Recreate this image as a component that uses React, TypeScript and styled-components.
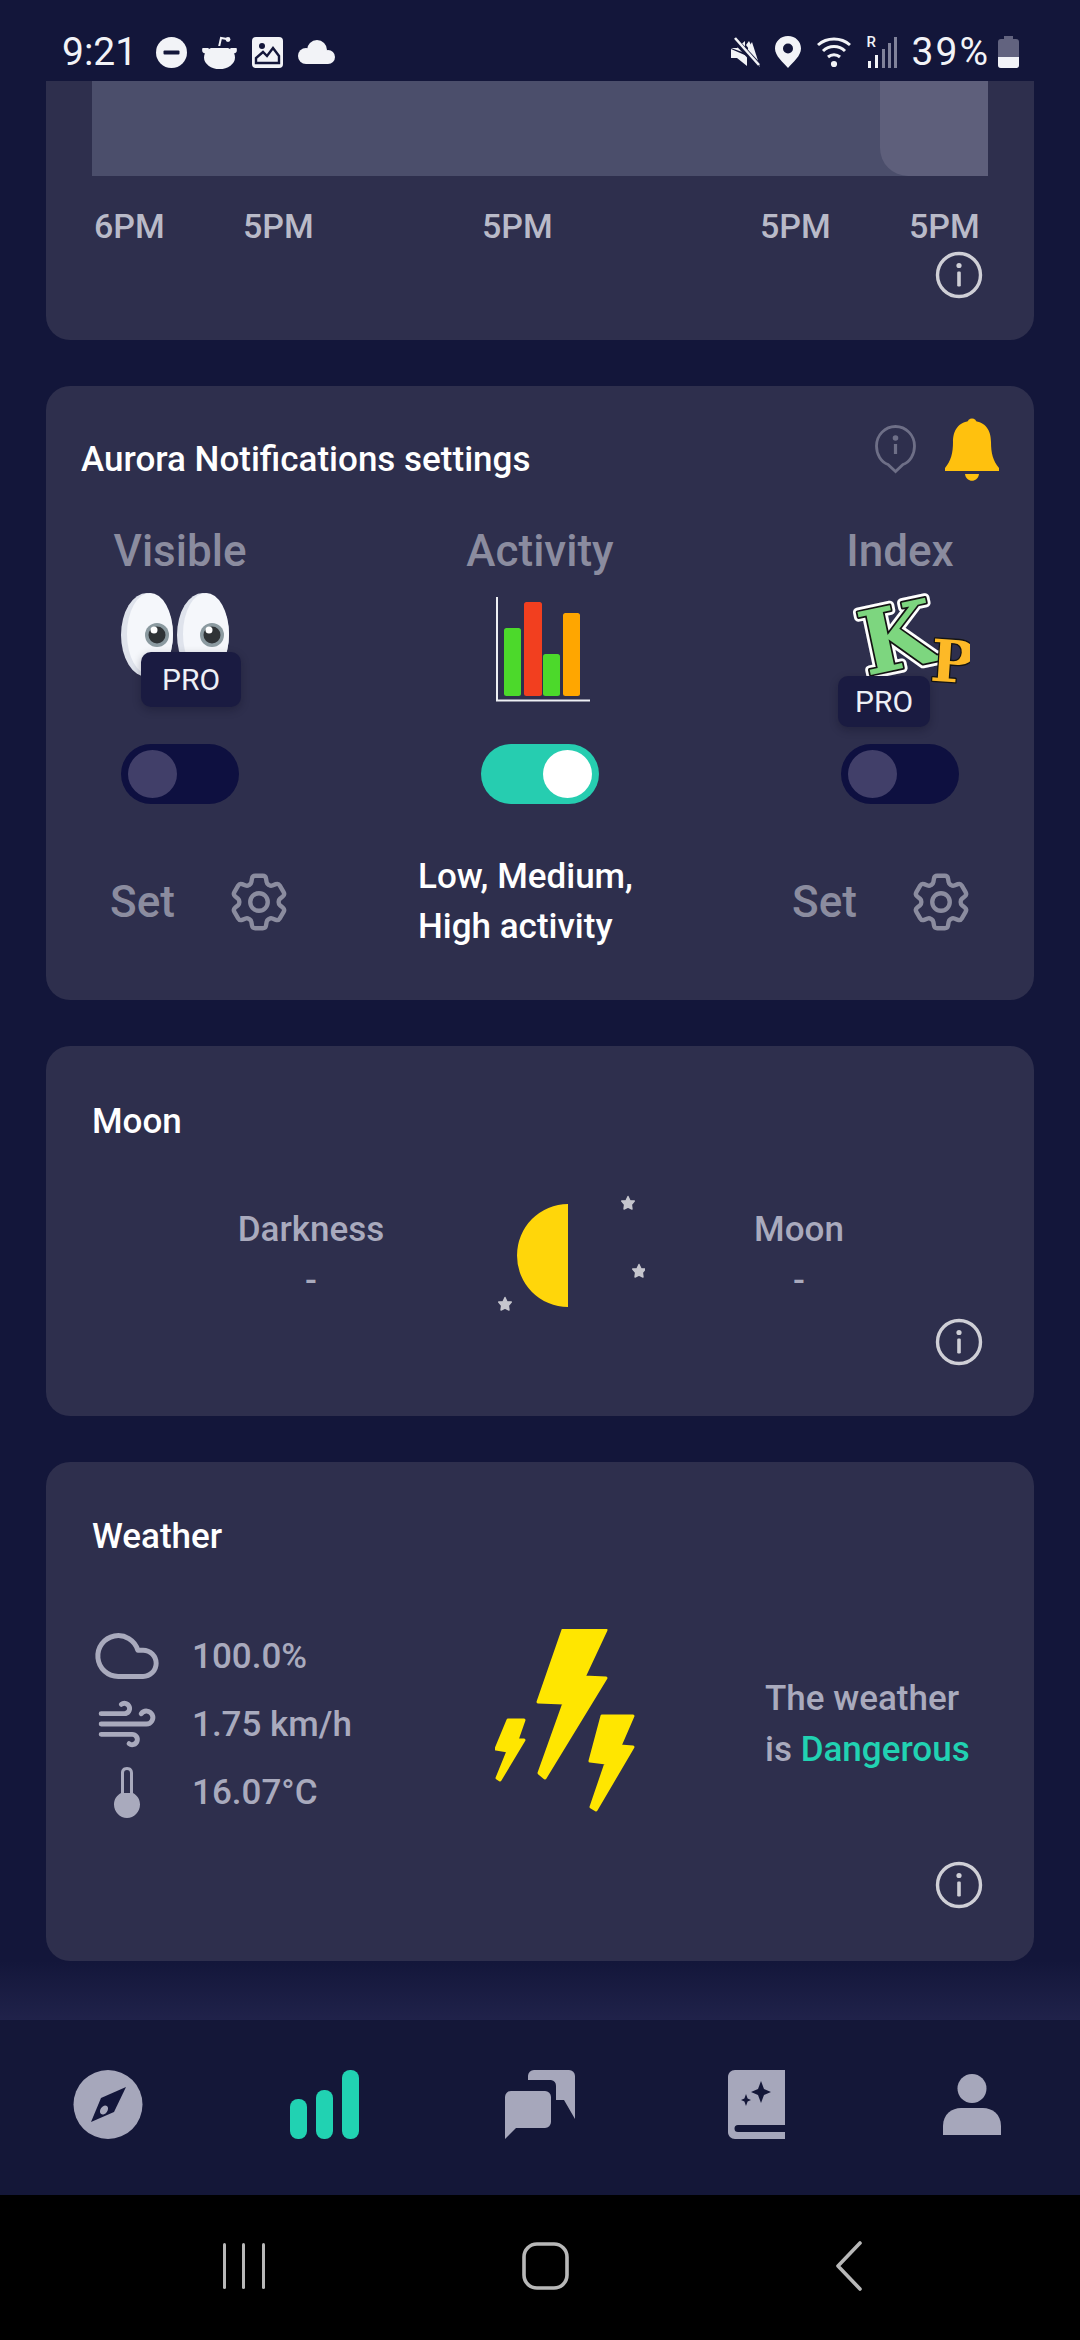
import React from 'react';
import styled, { createGlobalStyle } from 'styled-components';
import { Cloud, Wind } from 'lucide-react';
import { HiOutlineCog6Tooth } from 'react-icons/hi2';

const BG = '#13163a';
const CARD = '#2e2f4d';
const MUTED = '#8b8c9f';
const SOFT = '#a9aabd';
const TEAL = '#21d2b2';

const GlobalStyle = createGlobalStyle`
  html, body { margin: 0; padding: 0; background: ${BG}; }
  * { box-sizing: border-box; }
  body { font-family: Roboto, "Liberation Sans", sans-serif; }
`;

const InfoIcon = () => (
  <InfoSvg viewBox="0 0 48 48" fill="none">
    <circle cx="24" cy="24" r="21.5" stroke="#cfcfd6" strokeWidth="3.4" />
    <circle cx="24" cy="14.5" r="2.6" fill="#cfcfd6" />
    <rect x="22.2" y="20.5" width="3.6" height="15" rx="1.2" fill="#cfcfd6" />
  </InfoSvg>
);

const StatusBar = () => (
  <Status>
    <StatusGroup>
      <Clock>9:21</Clock>
      <svg width="31" height="31" viewBox="0 0 31 31"><circle cx="15.5" cy="15.5" r="15.5" fill="#f2f3f7" /><rect x="7.5" y="13.5" width="16" height="4" rx="1" fill={BG} /></svg>
      <svg width="35" height="33" viewBox="0 0 35 33" fill="#f2f3f7"><ellipse cx="17.5" cy="21.5" rx="15.5" ry="11.5" /><circle cx="3.5" cy="14" r="3.4" /><circle cx="31.5" cy="14" r="3.4" /><path d="M17 11 L19 2 L25 3" stroke="#f2f3f7" strokeWidth="2" fill="none" /><circle cx="26" cy="3.5" r="2.4" /><rect x="0" y="10" width="35" height="2" fill={BG} /></svg>
      <svg width="31" height="31" viewBox="0 0 31 31"><rect width="31" height="31" rx="4" fill="#f2f3f7" /><circle cx="10" cy="9" r="3" fill={BG} /><path d="M4 26 V21 L11 15 L15 19 L21 11 L27 19 V26 Z" fill="none" stroke={BG} strokeWidth="2.4" /></svg>
      <svg width="37" height="24" viewBox="0 0 37 24" fill="#f2f3f7"><circle cx="19" cy="10" r="10" /><circle cx="8" cy="16" r="8" /><circle cx="30" cy="17" r="7" /><rect x="8" y="15" width="22" height="9" /></svg>
    </StatusGroup>
    <StatusGroup>
      <svg width="30" height="31" viewBox="0 0 30 31" fill="#f2f3f7"><path d="M1 11 H7 L15 4 V16 Z M1 12 V21 H7 L17 29 V19 Z" /><path d="M22 5 L16 15 L30 30" stroke="#f2f3f7" strokeWidth="0" /><path d="M4 2 L29 29" stroke={BG} strokeWidth="6" /><path d="M5 1 L29 28" stroke="#f2f3f7" strokeWidth="2.6" /><path d="M19 4 L23 12 L21 15 L16 8 Z" /></svg>
      <svg width="26" height="32" viewBox="0 0 26 32"><path d="M13 0 C5.5 0 0 5.5 0 12.5 C0 20 8 26 13 32 C18 26 26 20 26 12.5 C26 5.5 20.5 0 13 0 Z" fill="#f2f3f7" /><circle cx="13" cy="12.5" r="5" fill={BG} /></svg>
      <svg width="36" height="32" viewBox="0 0 36 32" fill="none" stroke="#f2f3f7" strokeWidth="3"><path d="M2 9 C11 1 25 1 34 9" /><path d="M7 15 C13 9 23 9 29 15" /><path d="M12 21 C15.5 18 20.5 18 24 21" /><circle cx="18" cy="28" r="1.6" fill="#f2f3f7" /></svg>
      <SignalBox>
        <SignalR>R</SignalR>
        <svg width="30" height="32" viewBox="0 0 30 32">
          <rect x="1" y="25" width="3" height="7" fill="#f2f3f7" />
          <rect x="8" y="19" width="3" height="13" fill="#f2f3f7" />
          <rect x="15" y="13" width="3" height="19" fill="#80829a" />
          <rect x="21" y="7" width="3" height="25" fill="#80829a" />
          <rect x="27" y="1" width="3" height="31" fill="#80829a" />
        </svg>
      </SignalBox>
      <Percent>39%</Percent>
      <svg width="21" height="32" viewBox="0 0 21 32"><rect x="6" y="0" width="9" height="4" fill="#62637f" /><rect y="3" width="21" height="29" rx="3" fill="#62637f" /><path d="M0 21 H21 V29 a3 3 0 0 1-3 3 H3 a3 3 0 0 1-3-3 Z" fill="#f2f3f7" /></svg>
    </StatusGroup>
  </Status>
);

const EyesIcon = () => (
  <IconSvg viewBox="0 0 140 117">
    <ellipse cx="37" cy="45" rx="26" ry="42" fill="#dfe3ec" />
    <ellipse cx="40" cy="44" rx="23" ry="41" fill="#f5f7fb" />
    <ellipse cx="93" cy="45" rx="26" ry="42" fill="#dfe3ec" />
    <ellipse cx="96" cy="44" rx="23" ry="41" fill="#f5f7fb" />
    <circle cx="47" cy="45" r="12" fill="#8b9aa0" />
    <circle cx="47" cy="45" r="8.5" fill="#2f3336" />
    <circle cx="44" cy="40" r="3.5" fill="#fff" />
    <circle cx="102" cy="45" r="12" fill="#8b9aa0" />
    <circle cx="102" cy="45" r="8.5" fill="#2f3336" />
    <circle cx="99" cy="40" r="3.5" fill="#fff" />
  </IconSvg>
);

const BarsIcon = () => (
  <IconSvg viewBox="0 0 140 117">
    <path d="M27 7 V110.5 H120" fill="none" stroke="#eef0f4" strokeWidth="2" />
    <rect x="34" y="38" width="17" height="68" rx="2.5" fill="#4cd92b" />
    <rect x="54" y="12" width="18" height="94" rx="2.5" fill="#f23f1f" />
    <rect x="73" y="64" width="17" height="42" rx="2.5" fill="#4cd92b" />
    <rect x="93" y="23" width="17" height="83" rx="2.5" fill="#ffa600" />
  </IconSvg>
);

const KpIcon = () => (
  <IconSvg viewBox="0 0 140 117">
    <g transform="rotate(-12 70 50)" fontFamily="'DejaVu Serif', serif" fontWeight="700">
      <KpText x="30" y="78" fontSize="88" stroke="#fff" strokeWidth="9" fill="#fff">K</KpText>
      <KpText x="30" y="78" fontSize="88" stroke="#141414" strokeWidth="3.5" fill="#7dd67f">K</KpText>
    </g>
    <g transform="rotate(4 120 70)" fontFamily="'DejaVu Serif', serif" fontWeight="700">
      <KpText x="101" y="92" fontSize="58" stroke="#141414" strokeWidth="2.6" fill="#fdb927">P</KpText>
    </g>
  </IconSvg>
);

const BellIcon = () => (
  <svg width="54" height="64" viewBox="0 0 54 64" fill="#ffc10e">
    <circle cx="27" cy="5" r="4.6" />
    <path d="M27 3 C13 3 8 13 8 24 C8 35 6 43 0 50 L0 53 H54 L54 50 C48 43 46 35 46 24 C46 13 41 3 27 3 Z" />
    <path d="M20 56 H34 C33 65 21 65 20 56 Z" />
  </svg>
);

const HintIcon = () => (
  <svg width="41" height="49" viewBox="0 0 41 49" fill="none" stroke="#6e6f87" strokeWidth="2.8">
    <path d="M20.5 46.5 L13 39.5 C6 37 1.5 29.5 1.5 21 C1.5 10 10 1.5 20.5 1.5 C31 1.5 39.5 10 39.5 21 C39.5 29.5 35 37 28 39.5 Z" />
    <circle cx="20.5" cy="13" r="1.4" fill="#6e6f87" />
    <path d="M20.5 19 V29" strokeWidth="3.2" />
  </svg>
);

const MoonIcon = () => (
  <MoonSvg viewBox="0 0 150 130">
    <path d="M73 13 A51 51.5 0 0 0 73 116 Z" fill="#ffd60a" />
    {[
      [133, 12],
      [144, 80],
      [10, 113],
    ].map(([x, y]) => (
      <polygon
        key={x}
        transform={`translate(${x} ${y})`}
        points="0,-6.5 2,-2.2 6.3,-2 3.4,1.6 4,6 0,4 -4,6 -3.4,1.6 -6.3,-2 -2,-2.2"
        fill="#c6c6ce"
        stroke="#c6c6ce"
        strokeWidth="1.4"
        strokeLinejoin="round"
      />
    ))}
  </MoonSvg>
);

const BoltsIcon = () => (
  <BoltSvg viewBox="0 0 140 184">
    <g fill="#ffe600" stroke="#ffe600" strokeWidth="3" strokeLinejoin="round">
      <polygon points="68,1 111,1 89,48 111,49 50,149 44,144 69,74 43,73" />
      <polygon points="13,91 29,91 22,111 29,111 5,151 2,149 13,122 1,120" />
      <polygon points="107,87 138,87 125,117 138,118 101,181 96,178 111,134 95,132" />
    </g>
  </BoltSvg>
);

const ThermIcon = () => (
  <svg width="28" height="52" viewBox="0 0 28 52" fill={SOFT}>
    <path d="M14 1 C9.5 1 8 4 8 7 V27 C3.5 29.5 1 33.5 1 38.5 C1 46 7 52 14 52 C21 52 27 46 27 38.5 C27 33.5 24.5 29.5 20 27 V7 C20 4 18.5 1 14 1 Z M11 7 C11 5 12 4 14 4 C16 4 17 5 17 7 V27 H11 Z" fillRule="evenodd" />
  </svg>
);

const CompassIcon = () => (
  <svg width="70" height="69" viewBox="0 0 70 69">
    <ellipse cx="35" cy="34.5" rx="34.5" ry="34.5" fill="#a6a7bb" />
    <polygon points="53,17 41,42 18,52 28,28" fill={BG} />
    <ellipse cx="31" cy="40" rx="3.5" ry="5" transform="rotate(35 31 40)" fill="#a6a7bb" />
  </svg>
);

const TrendIcon = () => (
  <svg width="69" height="69" viewBox="0 0 69 69" fill={TEAL}>
    <rect x="0" y="29" width="17" height="40" rx="8" />
    <rect x="26" y="20" width="17" height="49" rx="8" />
    <rect x="52" y="0" width="17" height="69" rx="8" />
  </svg>
);

const ChatIcon = () => (
  <svg width="70" height="69" viewBox="0 0 70 69" fill="#a6a7bb">
    <path d="M23 6 a6 6 0 0 1 6-6 h35 a6 6 0 0 1 6 6 v43 l-11-19 H23 Z" />
    <path d="M18 10 H46 a6 6 0 0 1 5 6 V48 H18 Z" fill="#141738" />
    <path d="M0 27 a6 6 0 0 1 6-6 h34 a6 6 0 0 1 6 6 v25 a6 6 0 0 1-6 6 H11 L0 69 Z" />
  </svg>
);

const BookIcon = () => (
  <svg width="57" height="69" viewBox="0 0 57 69" fill="#a6a7bb">
    <path d="M7 0 H57 V69 H7 C3 69 0 66 0 62 V7 C0 3 3 0 7 0 Z" />
    <path d="M10 55 H57 V62 H10 a3.5 3.5 0 0 1 0-7 Z" fill="#141738" />
    <path d="M33 11 L36 19 L43 22 L36 25 L33 33 L30 25 L23 22 L30 19 Z" fill="#141738" />
    <path d="M18 24 L19.6 28.5 L23 30 L19.6 31.5 L18 36 L16.4 31.5 L13 30 L16.4 28.5 Z" fill="#141738" />
  </svg>
);

const PersonIcon = () => (
  <svg width="58" height="61" viewBox="0 0 58 61" fill="#a6a7bb">
    <circle cx="29" cy="14.5" r="14.5" />
    <path d="M0 61 V52 C0 40 9 34 18 34 H40 C49 34 58 40 58 52 V61 Z" />
  </svg>
);

const SetControl = ({ offset }: { offset: number }) => (
  <SetRow $offset={offset}>
    <SetLabel>Set</SetLabel>
    <HiOutlineCog6Tooth size={70} color={MUTED} />
  </SetRow>
);

const ticks = [
  { label: '6PM', gap: 0 },
  { label: '5PM', gap: 72 },
  { label: '5PM', gap: 162 },
  { label: '5PM', gap: 201 },
  { label: '5PM', gap: 72 },
];

export default function App() {
  return (
    <Screen>
      <GlobalStyle />
      <StatusBar />
      <Scroller>
        <ChartCard>
          <ChartArea>
            <ChartHighlight />
          </ChartArea>
          <TickRow>
            {ticks.map((t, i) => (
              <Tick key={i} $gap={t.gap}>
                {t.label}
              </Tick>
            ))}
          </TickRow>
          <InfoRow $top={3} />
        </ChartCard>

        <AlertCard>
          <AlertHeader>
            <AlertTitle>Aurora Notifications settings</AlertTitle>
            <HeaderIcons>
              <HintIcon />
              <BellIcon />
            </HeaderIcons>
          </AlertHeader>
          <AlertGrid>
            <AlertColumn>
              <ColumnLabel>Visible</ColumnLabel>
              <IconBox>
                <EyesIcon />
                <ProBadge $left={31} $top={62} $w={100} $h={55}>PRO</ProBadge>
              </IconBox>
              <Toggle $on={false} />
              <SetControl offset={64} />
            </AlertColumn>
            <AlertColumn>
              <ColumnLabel>Activity</ColumnLabel>
              <IconBox>
                <BarsIcon />
              </IconBox>
              <Toggle $on />
              <ActivityText>
                Low, Medium,
                <br />
                High activity
              </ActivityText>
            </AlertColumn>
            <AlertColumn>
              <ColumnLabel>Index</ColumnLabel>
              <IconBox>
                <KpIcon />
                <ProBadge $left={8} $top={86} $w={92} $h={51}>PRO</ProBadge>
              </IconBox>
              <Toggle $on={false} />
              <SetControl offset={26} />
            </AlertColumn>
          </AlertGrid>
        </AlertCard>

        <MoonCard>
          <CardTitle>Moon</CardTitle>
          <MoonRow>
            <MoonStat>
              <StatLabel>Darkness</StatLabel>
              <StatValue>-</StatValue>
            </MoonStat>
            <MoonIcon />
            <MoonStat>
              <StatLabel>Moon</StatLabel>
              <StatValue>-</StatValue>
            </MoonStat>
          </MoonRow>
          <InfoRow $top={11} />
        </MoonCard>

        <WeatherCard>
          <CardTitle>Weather</CardTitle>
          <WeatherRow>
            <WeatherList>
              <WeatherItem>
                <WeatherIcon><Cloud size={76} strokeWidth={1.7} color={SOFT} /></WeatherIcon>
                <WeatherValue>100.0%</WeatherValue>
              </WeatherItem>
              <WeatherItem>
                <WeatherIcon><Wind size={62} strokeWidth={1.9} color={SOFT} /></WeatherIcon>
                <WeatherValue>1.75 km/h</WeatherValue>
              </WeatherItem>
              <WeatherItem>
                <WeatherIcon><ThermIcon /></WeatherIcon>
                <WeatherValue>16.07°C</WeatherValue>
              </WeatherItem>
            </WeatherList>
            <BoltsIcon />
            <WeatherVerdict>
              The weather
              <br />
              is <Danger>Dangerous</Danger>
            </WeatherVerdict>
          </WeatherRow>
          <InfoRow $top={35} />
        </WeatherCard>
        <FadeBand />
      </Scroller>

      <BottomNav>
        <NavItem><CompassIcon /></NavItem>
        <NavItem><TrendIcon /></NavItem>
        <NavItem><ChatIcon /></NavItem>
        <NavItem><BookIcon /></NavItem>
        <NavItem><PersonIcon /></NavItem>
      </BottomNav>

      <SystemNav>
        <svg width="60" height="48" viewBox="0 0 60 48" fill="#b8b8b8">
          <rect x="10" y="1" width="3" height="46" rx="1.5" />
          <rect x="29" y="1" width="3" height="46" rx="1.5" />
          <rect x="49" y="1" width="3" height="46" rx="1.5" />
        </svg>
        <svg width="60" height="48" viewBox="0 0 60 48" fill="none">
          <rect x="8" y="2" width="43" height="44" rx="13" stroke="#b8b8b8" strokeWidth="3.6" />
        </svg>
        <svg width="60" height="50" viewBox="0 0 60 50" fill="none">
          <path d="M41 2 L19 25 L41 48" stroke="#b8b8b8" strokeWidth="3.6" strokeLinecap="round" strokeLinejoin="round" />
        </svg>
      </SystemNav>
    </Screen>
  );
}

function InfoRow({ $top }: { $top: number }) {
  return (
    <InfoWrap $top={$top}>
      <InfoIcon />
    </InfoWrap>
  );
}

const Screen = styled.div`
  width: 1080px;
  height: 2340px;
  display: flex;
  flex-direction: column;
  background: ${BG};
  overflow: hidden;
`;

const Status = styled.div`
  height: 81px;
  flex: none;
  padding: 22px 61px 0 62px;
  display: flex;
  justify-content: space-between;
  align-items: flex-start;
`;

const StatusGroup = styled.div`
  height: 60px;
  display: flex;
  align-items: center;
  gap: 15px;
`;

const Clock = styled.span`
  font-size: 39px;
  color: #f2f3f7;
  margin-right: 4px;
`;

const Percent = styled.span`
  font-size: 39px;
  color: #f2f3f7;
  letter-spacing: 2px;
  margin-right: -7px;
`;

const SignalBox = styled.div`
  position: relative;
  width: 30px;
  height: 32px;
`;

const SignalR = styled.span`
  position: absolute;
  left: 0;
  top: -3px;
  font-size: 15px;
  font-weight: 500;
  color: #f2f3f7;
`;

const Scroller = styled.div`
  flex: 1;
  min-height: 0;
  padding: 0 46px;
  display: flex;
  flex-direction: column;
  gap: 46px;
`;

const ChartCard = styled.section`
  height: 259px;
  flex: none;
  background: ${CARD};
  border-radius: 0 0 24px 24px;
`;

const ChartArea = styled.div`
  margin: 0 46px;
  height: 95px;
  background: #4b4e6b;
  display: flex;
  justify-content: flex-end;
`;

const ChartHighlight = styled.div`
  width: 108px;
  background: #5e5f7b;
  border-bottom-left-radius: 28px;
`;

const TickRow = styled.div`
  margin: 28px 0 0 48px;
  display: flex;
  height: 44px;
`;

const Tick = styled.span<{ $gap: number }>`
  margin-left: ${({ $gap }) => $gap}px;
  width: 77px;
  font-size: 34px;
  font-weight: 500;
  line-height: 44px;
  color: #b9bac8;
  white-space: nowrap;
`;

const InfoWrap = styled.div<{ $top: number }>`
  margin-top: ${({ $top }) => $top}px;
  padding-right: 51px;
  display: flex;
  justify-content: flex-end;
`;

const InfoSvg = styled.svg`
  width: 48px;
  height: 48px;
  display: block;
`;

const AlertCard = styled.section`
  height: 614px;
  flex: none;
  background: ${CARD};
  border-radius: 24px;
  padding-top: 32px;
`;

const AlertHeader = styled.div`
  height: 64px;
  padding: 0 35px;
  display: flex;
  justify-content: space-between;
  align-items: flex-start;
`;

const AlertTitle = styled.h2`
  margin: 20px 0 0;
  font-size: 35px;
  line-height: 44px;
  font-weight: 500;
  color: #fff;
`;

const HeaderIcons = styled.div`
  display: flex;
  align-items: flex-start;
  gap: 29px;
  padding-top: 0;
  & > svg:first-child {
    margin-top: 7px;
  }
`;

const AlertGrid = styled.div`
  margin-top: 45px;
  display: grid;
  grid-template-columns: 268px 1fr 268px;
`;

const AlertColumn = styled.div`
  display: flex;
  flex-direction: column;
  align-items: center;
`;

const ColumnLabel = styled.div`
  height: 48px;
  font-size: 44px;
  line-height: 48px;
  font-weight: 500;
  color: ${MUTED};
`;

const IconBox = styled.div`
  position: relative;
  width: 140px;
  height: 117px;
  margin-top: 15px;
`;

const IconSvg = styled.svg`
  width: 140px;
  height: 117px;
  display: block;
`;

const KpText = styled.text`
  paint-order: stroke;
  stroke-linejoin: round;
`;

const ProBadge = styled.div<{ $left: number; $top: number; $w: number; $h: number }>`
  position: absolute;
  left: ${({ $left }) => $left}px;
  top: ${({ $top }) => $top}px;
  width: ${({ $w }) => $w}px;
  height: ${({ $h }) => $h}px;
  border-radius: 10px;
  background: #1a1b41;
  box-shadow: 0 3px 8px rgba(10, 10, 30, 0.3);
  color: #eef0f6;
  font-size: 30px;
  display: flex;
  align-items: center;
  justify-content: center;
`;

const Toggle = styled.div<{ $on: boolean }>`
  margin-top: 37px;
  width: 118px;
  height: 60px;
  border-radius: 30px;
  padding: 6px 7px;
  background: ${({ $on }) => ($on ? '#26cdb0' : '#0e1040')};
  display: flex;
  justify-content: ${({ $on }) => ($on ? 'flex-end' : 'flex-start')};
  &::after {
    content: '';
    width: 49px;
    height: 48px;
    border-radius: 50%;
    background: ${({ $on }) => ($on ? '#ffffff' : '#413f69')};
  }
`;

const SetRow = styled.div<{ $offset: number }>`
  align-self: flex-start;
  margin: 48px 0 0 ${({ $offset }) => $offset}px;
  width: 184px;
  height: 100px;
  display: flex;
  align-items: center;
  justify-content: space-between;
`;

const SetLabel = styled.span`
  font-size: 44px;
  font-weight: 500;
  color: ${MUTED};
`;

const ActivityText = styled.div`
  margin: 48px 14px 0 0;
  width: 230px;
  font-size: 35px;
  line-height: 50px;
  font-weight: 500;
  color: #fff;
  white-space: nowrap;
`;

const MoonCard = styled.section`
  height: 370px;
  flex: none;
  background: ${CARD};
  border-radius: 24px;
  padding-top: 54px;
`;

const CardTitle = styled.h2`
  margin: 0 0 0 46px;
  font-size: 35px;
  line-height: 44px;
  font-weight: 500;
  color: #fff;
`;

const MoonRow = styled.div`
  margin-top: 61px;
  padding-left: 165px;
  display: flex;
  align-items: center;
`;

const MoonStat = styled.div`
  width: 200px;
  text-align: center;
  color: ${SOFT};
  font-weight: 500;
`;

const StatLabel = styled.div`
  font-size: 35px;
  line-height: 50px;
`;

const StatValue = styled.div`
  font-size: 35px;
  line-height: 52px;
`;

const MoonSvg = styled.svg`
  width: 150px;
  height: 130px;
  margin: -14px 54px -14px 84px;
  flex: none;
`;

const WeatherCard = styled.section`
  height: 499px;
  flex: none;
  background: ${CARD};
  border-radius: 24px;
  padding-top: 53px;
`;

const WeatherRow = styled.div`
  margin-top: 63px;
  padding-left: 46px;
  display: flex;
  align-items: center;
`;

const WeatherList = styled.div`
  width: 403px;
  flex: none;
  display: flex;
  flex-direction: column;
`;

const WeatherItem = styled.div`
  height: 68px;
  display: flex;
  align-items: center;
  gap: 30px;
`;

const WeatherIcon = styled.div`
  width: 70px;
  height: 68px;
  display: flex;
  align-items: center;
  justify-content: center;
`;

const WeatherValue = styled.span`
  font-size: 35px;
  font-weight: 500;
  color: ${SOFT};
`;

const BoltSvg = styled.svg`
  width: 140px;
  height: 184px;
  flex: none;
  margin: -6px 130px 0 0;
`;

const WeatherVerdict = styled.div`
  font-size: 35px;
  line-height: 51px;
  font-weight: 500;
  color: ${SOFT};
  white-space: nowrap;
`;

const Danger = styled.span`
  color: ${TEAL};
`;

const FadeBand = styled.div`
  flex: 1;
  margin: -46px -46px 0;
  margin-top: -46px;
  background: linear-gradient(${BG}, #20224a);
`;

const BottomNav = styled.nav`
  height: 175px;
  flex: none;
  background: #141738;
  display: grid;
  grid-template-columns: repeat(5, 1fr);
  padding-bottom: 6px;
`;

const NavItem = styled.div`
  display: flex;
  align-items: center;
  justify-content: center;
`;

const SystemNav = styled.div`
  height: 145px;
  flex: none;
  background: #000;
  padding: 0 0 4px 213px;
  display: flex;
  align-items: center;
  gap: 243px;
`;
